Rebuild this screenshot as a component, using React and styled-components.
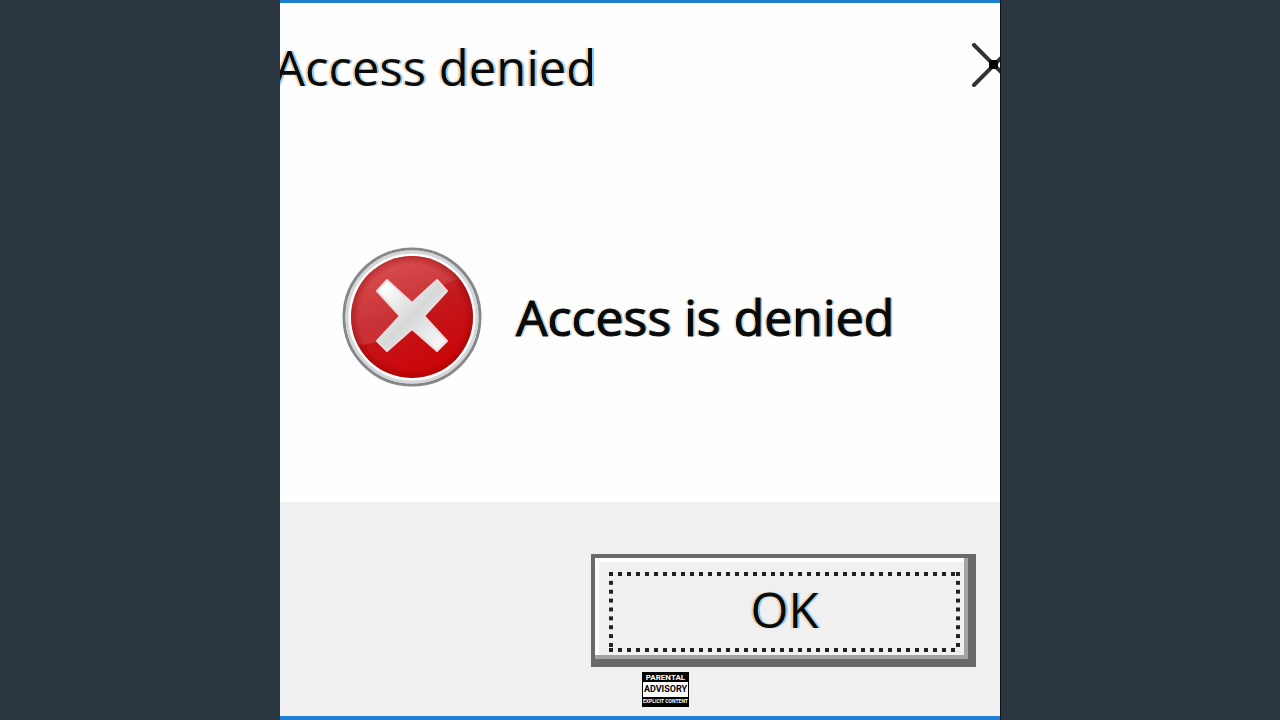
import React from 'react'
import styled, { createGlobalStyle, css } from 'styled-components'

const theme = {
    backdrop: '#29363f',
    accent: '#1f7fd2',
    footer: '#f0f0f0',
    shade: '#696969',
    font: '"Open Sans", "Noto Sans", sans-serif',
    label: 'Roboto, "Liberation Sans", sans-serif'
};

const GlobalStyle = createGlobalStyle`
    *, *::before, *::after {
        box-sizing: border-box;
    }

    body {
        margin: 0;
        background: ${theme.backdrop};
    }
`;

// coloured edges of the subpixel rendered labels
const fringe = css`
    text-shadow: -2px 0 1px rgba(255, 150, 30, .5), 2px 0 1px rgba(40, 160, 255, .6);
`;

const ErrorIcon = () => (
    <StyledErrorIcon viewBox="0 0 140 140" aria-hidden="true">
        <defs>
            <linearGradient id="red" x1="0.3" y1="0" x2="0.7" y2="1">
                <stop offset="0" stopColor="#d8474a" />
                <stop offset="0.45" stopColor="#c2191d" />
                <stop offset="1" stopColor="#cd0204" />
            </linearGradient>
            <linearGradient id="gloss" x1="0" y1="0" x2="0.6" y2="1">
                <stop offset="0" stopColor="#fff" stopOpacity="0.04" />
                <stop offset="1" stopColor="#fff" stopOpacity="0.14" />
            </linearGradient>
            <radialGradient id="edge">
                <stop offset="0.86" stopColor="#8c0000" stopOpacity="0" />
                <stop offset="1" stopColor="#8c0000" stopOpacity="0.4" />
            </radialGradient>
            <linearGradient id="cross" x1="0" y1="0" x2="1" y2="1">
                <stop offset="0.1" stopColor="#fff" />
                <stop offset="0.5" stopColor="#d6d8d8" />
                <stop offset="0.9" stopColor="#f6f6f6" />
            </linearGradient>
        </defs>
        <circle cx="70" cy="70" r="68" fill="#fdfdfd" stroke="#85888b" strokeWidth="3" />
        <circle cx="70" cy="70" r="65" fill="none" stroke="#d4d6d8" strokeWidth="3" />
        <circle cx="70" cy="70" r="61" fill="url(#red)" />
        <path d="M9 70a61 61 0 0 1 108-38C92 38 82 52 70 68C55 89 40 96 17 98A61 61 0 0 1 9 70z" fill="url(#gloss)" />
        <circle cx="70" cy="70" r="61" fill="url(#edge)" />
        <path
            d="M45 33L70 56L95 33L105 44L82 69L105 94L95 104L70 82L45 104L35 94L58 69L35 44z"
            fill="url(#cross)"
            stroke="#ecdede"
            strokeWidth="2"
            strokeLinejoin="round"
        />
    </StyledErrorIcon>
)

const App = () => {
    return (
        <Stage>
            <GlobalStyle />
            <Dialog role="alertdialog" aria-labelledby="title" aria-describedby="message">
                <TitleBar>
                    <Title id="title">Access denied</Title>
                    <CloseButton type="button" aria-label="Close">
                        <svg viewBox="0 0 44 44" width="44" height="44">
                            <path d="M2 2L42 42M42 2L2 42" stroke="#333" strokeWidth="4" strokeLinecap="round" />
                            <rect x="17" y="17" width="9" height="9" rx="2" fill="#000" />
                        </svg>
                    </CloseButton>
                </TitleBar>
                <Body>
                    <ErrorIcon />
                    <Message id="message">Access is denied</Message>
                </Body>
                <Footer>
                    <OkButton type="button">
                        <FocusRing>OK</FocusRing>
                    </OkButton>
                    <Advisory>
                        <AdvisoryBand>PARENTAL</AdvisoryBand>
                        <AdvisoryName>ADVISORY</AdvisoryName>
                        <AdvisoryBand $small>EXPLICIT CONTENT</AdvisoryBand>
                    </Advisory>
                </Footer>
            </Dialog>
        </Stage>
    )
}

const Stage = styled.main`
    display: flex;
    justify-content: center;
    min-height: 100vh;
    background: ${theme.backdrop};
    font-family: ${theme.font};
    color: #0a0a0a;
`;

const Dialog = styled.section`
    display: flex;
    flex-direction: column;
    width: 100%;
    max-width: 720px;
    overflow: hidden;
    background: #fefefe;
    border-top: 3px solid ${theme.accent};
    border-bottom: 4px solid ${theme.accent};
    box-shadow: 1px 0 #0a0f13;
`;

const TitleBar = styled.header`
    display: flex;
    align-items: flex-start;
    justify-content: space-between;
    height: 128px;
    margin: 0 -16px 0 -6px;
    padding-top: 32px;
`;

const Title = styled.h1`
    margin: 0;
    font-size: 49px;
    line-height: 64px;
    font-weight: 400;
    white-space: nowrap;
    ${fringe}
`;

const CloseButton = styled.button`
    display: flex;
    padding: 8px 0;
    border: none;
    background: none;
    cursor: pointer;
`;

const Body = styled.div`
    display: flex;
    flex: 1;
    align-items: center;
    gap: 34px;
    padding: 0 62px;
`;

const StyledErrorIcon = styled.svg`
    flex: none;
    width: 140px;
    height: 140px;
`;

const Message = styled.p`
    margin: 0;
    font-size: 50px;
    line-height: 64px;
    font-weight: 500;
    white-space: nowrap;
    -webkit-text-stroke: 1px #0a0a0a;
    ${fringe}
`;

const Footer = styled.footer`
    display: flex;
    flex-direction: column;
    align-items: flex-end;
    gap: 5px;
    padding: 52px 24px 9px;
    background: ${theme.footer};
`;

const OkButton = styled.button`
    width: 385px;
    max-width: 100%;
    height: 113px;
    padding: 10px 4px 4px 14px;
    border: 4px solid ${theme.shade};
    border-right-width: 8px;
    border-bottom-width: 8px;
    background: ${theme.footer};
    box-shadow: inset -4px -4px #a3a3a3, inset 4px 4px #fff;
    color: #0a0a0a;
    font-family: ${theme.font};
    font-size: 49px;
    line-height: 64px;
    cursor: pointer;
    ${fringe}
`;

const dotX = 'linear-gradient(90deg, #222 4px, transparent 4px)';
const dotY = 'linear-gradient(#222 4px, transparent 4px)';

const FocusRing = styled.span`
    display: flex;
    align-items: center;
    justify-content: center;
    height: 80px;
    margin-right: 4px;
    padding-bottom: 6px;
    background:
        ${dotX} top left / 9px 4px round no-repeat,
        ${dotX} bottom left / 9px 4px round no-repeat,
        ${dotY} top left / 4px 9px no-repeat round,
        ${dotY} top right / 4px 9px no-repeat round;
`;

const Advisory = styled.div`
    display: flex;
    flex-direction: column;
    width: 47px;
    height: 35px;
    margin-right: 287px;
    border: 1px solid #000;
    background: #fff;
    font-family: ${theme.label};
    font-weight: 700;
    text-align: center;
    white-space: nowrap;
`;

const AdvisoryBand = styled.span`
    height: 9px;
    background: #000;
    color: #fff;
    font-size: ${({ $small }) => ($small ? 5 : 8)}px;
    line-height: 9px;
`;

const AdvisoryName = styled.span`
    flex: 1;
    color: #000;
    font-size: 9px;
    line-height: 15px;
`;

export default App
